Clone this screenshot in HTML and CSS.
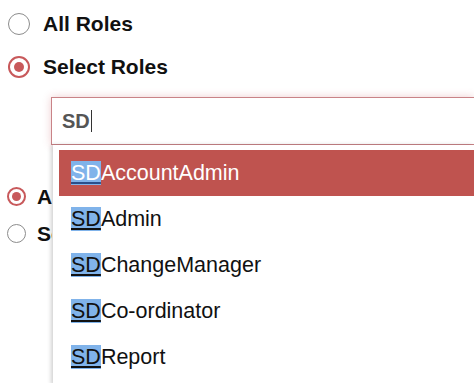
FILE: index.html
```html
<!DOCTYPE html>
<html lang="en">
<head>
    <meta charset="UTF-8">
    <title>Roles</title>
    <link rel="stylesheet" href="styles.css">
</head>
<body>
<div class="page">
    <div class="group">
        <label class="opt"><span class="radio"></span>All Roles</label>
        <label class="opt"><span class="radio checked"></span>Select Roles</label>
    </div>
    <div class="picker">
        <div class="search">SD<span class="caret"></span></div>
        <ul class="menu">
            <li class="active"><mark>SD</mark>AccountAdmin</li>
            <li><mark>SD</mark>Admin</li>
            <li><mark>SD</mark>ChangeManager</li>
            <li><mark>SD</mark>Co-ordinator</li>
            <li><mark>SD</mark>Report</li>
        </ul>
    </div>
    <div class="group alt">
        <label class="opt"><span class="radio checked"></span>All Users</label>
        <label class="opt"><span class="radio"></span>Select Users</label>
    </div>
</div>
</body>
</html>
```

FILE: styles.css
```css
* {
    box-sizing: border-box;
}

html, body {
    margin: 0;
    overflow: hidden;
}

body {
    background: #fff;
    font-family: "Liberation Sans", Arial, sans-serif;
}

.page {
    padding-top: 2px;
    min-height: 383px;
    position: relative;
}

.group {
    display: flex;
    flex-direction: column;
}

.opt {
    display: flex;
    align-items: center;
    height: 43px;
    padding-left: 8px;
    gap: 13px;
    font-size: 21px;
    font-weight: bold;
    color: #111;
}

.radio {
    width: 22px;
    height: 22px;
    border-radius: 50%;
    border: 1.5px solid #8c8c8c;
    background: #fff;
    display: flex;
    align-items: center;
    justify-content: center;
    flex: none;
}

.radio.checked {
    border: 2px solid #c8595b;
}

.radio.checked::after {
    content: "";
    width: 10px;
    height: 10px;
    border-radius: 50%;
    background: #c8595b;
}

.group.alt {
    margin-top: 33px;
}

.group.alt .opt {
    height: 37px;
    padding-left: 7px;
    gap: 11px;
    width: 52px;
    overflow: hidden;
    white-space: nowrap;
}

.group.alt .radio {
    width: 19px;
    height: 19px;
}

.group.alt .radio.checked::after {
    width: 9px;
    height: 9px;
}

.picker {
    position: relative;
    margin: 9px 0 0 51px;
    z-index: 1;
}

.search {
    height: 48px;
    border: 1px solid #c98387;
    border-right: none;
    box-shadow: 0 0 8px rgba(200, 90, 95, .3);
    padding: 0 0 0 10px;
    display: flex;
    align-items: center;
    font-size: 20px;
    font-weight: bold;
    color: #555;
}

.caret {
    width: 1.5px;
    height: 22px;
    background: #333;
    margin-left: 1px;
}

.menu {
    position: absolute;
    top: 48px;
    left: 2px;
    right: 0;
    height: 240px;
    margin: 0;
    padding: 5px 0 0 6px;
    list-style: none;
    background: #fff;
    box-shadow: -2px 0 4px rgba(0, 0, 0, .18);
}

.menu li {
    height: 46px;
    line-height: 46px;
    padding-left: 12px;
    font-size: 21.5px;
    color: #111;
}

.menu li.active {
    background: #bf534f;
    color: #fff;
}

.menu mark {
    background: #80b3ea;
    color: inherit;
    text-decoration: underline;
    text-decoration-thickness: 2px;
    text-underline-offset: 2px;
}

.menu li.active mark {
    color: #fff;
    text-decoration-color: #2a4f8a;
}
```
